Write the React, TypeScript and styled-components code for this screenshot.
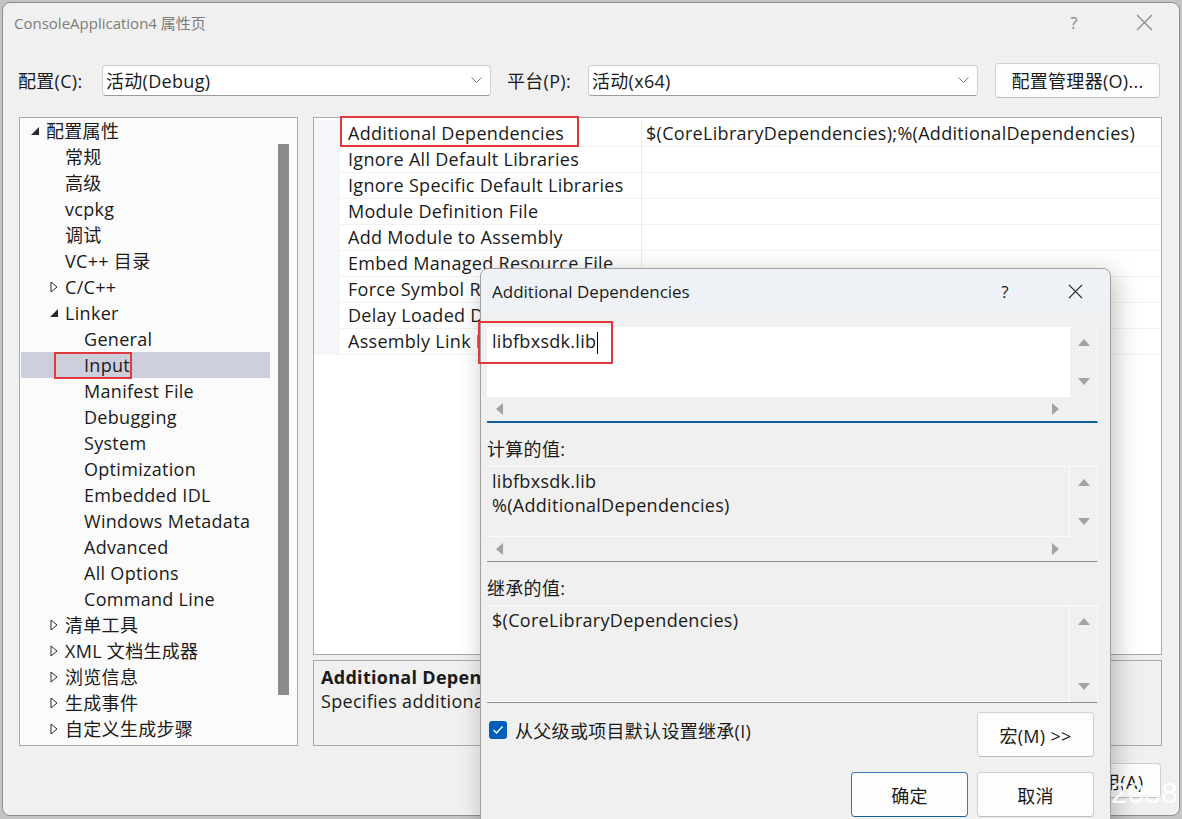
import React from 'react';
import styled, { createGlobalStyle } from 'styled-components';

const GlobalStyle = createGlobalStyle`
  html, body {
    margin: 0;
    padding: 0;
    height: 819px;
    overflow: hidden;
    background: #c4c4c4;
  }
  body {
    font-family: "Open Sans", "Noto Sans CJK SC", sans-serif;
    font-size: 18px;
    letter-spacing: 0.3px;
    color: #1a1a1a;
  }
`;

const Page = styled.div`
  position: relative;
  width: 1182px;
  height: 819px;
  overflow: hidden;
`;

const Window = styled.div`
  margin: 2px 2px 0 2px;
  height: 814px;
  box-sizing: border-box;
  border: 1px solid #8e8e8e;
  border-radius: 8px;
  background: #f0f0f0;
  display: flex;
  flex-direction: column;
`;

const TitleBar = styled.div<{ $h: number; $bg: string }>`
  height: ${(p) => p.$h}px;
  flex: none;
  display: flex;
  align-items: center;
  padding-left: 11px;
  background: ${(p) => p.$bg};
  border-radius: 8px 8px 0 0;
`;

const TitleText = styled.span<{ $muted?: boolean }>`
  font-size: ${(p) => (p.$muted ? 15 : 17)}px;
  letter-spacing: 0;
  color: ${(p) => (p.$muted ? '#7c7c7c' : '#1a1a1a')};
`;

const CaptionButton = styled.div<{ $muted?: boolean }>`
  width: 70px;
  height: 100%;
  display: flex;
  align-items: center;
  justify-content: center;
  color: ${(p) => (p.$muted ? '#8a8a8a' : '#1a1a1a')};
  font-size: 17px;
  &:first-of-type {
    margin-left: auto;
  }
`;

const ConfigRow = styled.div`
  margin-top: 21px;
  height: 36px;
  display: flex;
  align-items: center;
  padding-left: 15px;
`;

const ConfigLabel = styled.span<{ $w: number }>`
  width: ${(p) => p.$w}px;
  flex: none;
`;

const Select = styled.div<{ $w: number }>`
  width: ${(p) => p.$w}px;
  height: 31px;
  box-sizing: border-box;
  border: 1px solid #cfcfcf;
  border-bottom-color: #9a9a9a;
  border-radius: 4px;
  background: #fff;
  display: flex;
  align-items: center;
  justify-content: space-between;
  padding: 0 8px 0 3px;
  margin-right: 16px;
`;

const PushButton = styled.div<{ $w: number; $h: number; $default?: boolean }>`
  width: ${(p) => p.$w}px;
  height: ${(p) => p.$h}px;
  box-sizing: border-box;
  border: 1px solid ${(p) => (p.$default ? '#3b78b5' : '#d0d0d0')};
  border-bottom-color: ${(p) => (p.$default ? '#1f5f9e' : '#bdbdbd')};
  border-radius: 4px;
  background: #fdfdfd;
  display: flex;
  align-items: center;
  justify-content: center;
  flex: none;
`;

const Main = styled.div`
  margin-top: 19px;
  height: 629px;
  display: flex;
  gap: 15px;
  padding-left: 16px;
`;

const Tree = styled.div`
  width: 279px;
  box-sizing: border-box;
  border: 1px solid #a9a9a9;
  background: #fbfbfb;
  display: flex;
`;

const TreeList = styled.div`
  flex: 1;
  padding-left: 1px;
`;

const TreeRow = styled.div<{ $indent: number; $selected?: boolean }>`
  height: 26px;
  line-height: 26px;
  display: flex;
  align-items: center;
  padding-left: ${(p) => p.$indent}px;
  background: ${(p) => (p.$selected ? '#cdd0dc' : 'transparent')};
  white-space: nowrap;
`;

const Toggle = styled.span`
  width: 15px;
  flex: none;
  display: flex;
  align-items: center;
`;

const ScrollColumn = styled.div`
  width: 27px;
  flex: none;
  padding: 26px 0 0 8px;
  box-sizing: border-box;
`;

const Thumb = styled.div`
  width: 11px;
  height: 551px;
  background: #8b8b8b;
`;

const Marked = styled.span<{ $t: number; $r: number; $b: number; $l: number }>`
  position: relative;
  display: inline-block;
  &::after {
    content: '';
    position: absolute;
    z-index: 2;
    top: ${(p) => p.$t}px;
    right: ${(p) => p.$r}px;
    bottom: ${(p) => p.$b}px;
    left: ${(p) => p.$l}px;
    border: 2px solid #e0393e;
    pointer-events: none;
  }
`;

const RightPane = styled.div`
  width: 849px;
  display: flex;
  flex-direction: column;
  gap: 5px;
`;

const Grid = styled.div`
  height: 538px;
  box-sizing: border-box;
  border: 1px solid #a9a9a9;
  background: #fff;
  padding-top: 2px;
`;

const GridRow = styled.div`
  display: grid;
  grid-template-columns: 26px 301px 1fr;
  height: 26px;
  line-height: 26px;
`;

const Gutter = styled.div`
  background: #f4f6fa;
`;

const NameCell = styled.div`
  padding-left: 8px;
  border-bottom: 1px solid #f2f2f2;
  white-space: nowrap;
`;

const ValueCell = styled.div`
  padding-left: 4px;
  border-left: 1px solid #ededed;
  border-bottom: 1px solid #f2f2f2;
  white-space: nowrap;
`;

const Description = styled.div`
  height: 86px;
  box-sizing: border-box;
  border: 1px solid #a9a9a9;
  padding: 4px 7px;
  line-height: 24px;
`;

const DescTitle = styled.div`
  font-weight: 700;
`;

const FooterRow = styled.div`
  margin-top: 17px;
  display: flex;
  justify-content: flex-end;
  gap: 8px;
  padding-right: 18px;
`;

const Dialog = styled.div`
  position: absolute;
  left: 480px;
  top: 268px;
  width: 631px;
  height: 570px;
  box-sizing: border-box;
  border: 1px solid #a0a0a0;
  border-radius: 8px 8px 0 0;
  background: #f0f0f0;
  box-shadow: 4px 6px 26px rgba(0, 0, 0, 0.26);
  display: flex;
  flex-direction: column;
`;

const DialogBody = styled.div`
  padding: 13px 12px 0 6px;
`;

const ValueBox = styled.div<{ $hscroll?: boolean; $edit?: boolean }>`
  display: grid;
  grid-template-columns: 1fr 27px;
  grid-template-rows: ${(p) => (p.$hscroll ? '70px 24px' : '96px')};
  border-top: 1px solid ${(p) => (p.$edit ? 'transparent' : '#fbfbfb')};
  border-right: 1px solid #fbfbfb;
  border-bottom: ${(p) => (p.$edit ? '2px solid #0f5d98' : '1px solid #8c8c8c')};
`;

const TextArea = styled.div<{ $white?: boolean }>`
  background: ${(p) => (p.$white ? '#fff' : 'transparent')};
  border-right: 1px solid ${(p) => (p.$white ? '#fff' : '#fbfbfb')};
  border-bottom: 1px solid ${(p) => (p.$white ? '#fff' : '#fbfbfb')};
  padding: 2px 5px;
  line-height: 24px;
  white-space: nowrap;
`;

const VScroll = styled.div`
  display: flex;
  flex-direction: column;
  justify-content: space-between;
  align-items: center;
  padding: 12px 0 11px;
`;

const HScroll = styled.div`
  display: flex;
  justify-content: space-between;
  align-items: center;
  padding: 0 10px 0 9px;
`;

const Caret = styled.span`
  display: inline-block;
  width: 1px;
  height: 22px;
  background: #000;
  vertical-align: middle;
  margin-left: 1px;
`;

const FieldLabel = styled.div`
  margin-top: 14px;
  margin-bottom: 5px;
  line-height: 24px;
`;

const InheritRow = styled.div`
  margin-top: 9px;
  display: flex;
  justify-content: space-between;
  padding-right: 4px;
`;

const CheckGroup = styled.label`
  display: flex;
  align-items: center;
  gap: 8px;
  padding: 6px 0 0 2px;
  height: 24px;
`;

const CheckBox = styled.span`
  width: 18px;
  height: 18px;
  border-radius: 3px;
  background: #005fb8;
  display: flex;
  align-items: center;
  justify-content: center;
`;

const DialogButtons = styled.div`
  margin-top: 15px;
  display: flex;
  justify-content: flex-end;
  gap: 9px;
  padding-right: 4px;
`;

const Watermark = styled.div`
  position: absolute;
  left: 1111px;
  top: 776px;
  font-family: "Liberation Sans", sans-serif;
  font-size: 30px;
  letter-spacing: 0;
  color: rgba(255, 255, 255, 0.9);
`;

const Chevron = () => (
  <svg width="11" height="7" viewBox="0 0 11 7">
    <polyline points="0.5,0.5 5.5,5.5 10.5,0.5" fill="none" stroke="#7a7a7a" strokeWidth="1" />
  </svg>
);

const CloseGlyph = ({ size, color }: { size: number; color: string }) => (
  <svg width={size} height={size} viewBox="0 0 16 16">
    <path d="M1 1 L15 15 M15 1 L1 15" stroke={color} strokeWidth="1.2" fill="none" />
  </svg>
);

const Expanded = () => (
  <svg width="8" height="8" viewBox="0 0 8 8">
    <polygon points="8,0 8,8 0,8" fill="#2b2b2b" />
  </svg>
);

const Collapsed = () => (
  <svg width="8" height="12" viewBox="0 0 8 12">
    <polygon points="1,1 7,6 1,11" fill="none" stroke="#2b2b2b" strokeWidth="1" />
  </svg>
);

const Arrow = ({ dir }: { dir: 'up' | 'down' | 'left' | 'right' }) => {
  const pts = {
    up: '0,7 6,0 12,7',
    down: '0,0 12,0 6,7',
    left: '7,0 7,12 0,6',
    right: '0,0 0,12 7,6',
  }[dir];
  const horiz = dir === 'left' || dir === 'right';
  return (
    <svg width={horiz ? 8 : 12} height={horiz ? 12 : 8} viewBox={horiz ? '0 0 8 12' : '0 0 12 8'}>
      <polygon points={pts} fill="#a3a3a3" />
    </svg>
  );
};

const Check = () => (
  <svg width="12" height="10" viewBox="0 0 12 10">
    <polyline points="1.5,5 4.5,8 10.5,1.5" fill="none" stroke="#fff" strokeWidth="1.4" />
  </svg>
);

type Node = { label: string; level: 0 | 1 | 2; toggle?: 'open' | 'closed'; selected?: boolean };

const treeNodes: Node[] = [
  { label: '配置属性', level: 0, toggle: 'open' },
  { label: '常规', level: 1 },
  { label: '高级', level: 1 },
  { label: 'vcpkg', level: 1 },
  { label: '调试', level: 1 },
  { label: 'VC++ 目录', level: 1 },
  { label: 'C/C++', level: 1, toggle: 'closed' },
  { label: 'Linker', level: 1, toggle: 'open' },
  { label: 'General', level: 2 },
  { label: 'Input', level: 2, selected: true },
  { label: 'Manifest File', level: 2 },
  { label: 'Debugging', level: 2 },
  { label: 'System', level: 2 },
  { label: 'Optimization', level: 2 },
  { label: 'Embedded IDL', level: 2 },
  { label: 'Windows Metadata', level: 2 },
  { label: 'Advanced', level: 2 },
  { label: 'All Options', level: 2 },
  { label: 'Command Line', level: 2 },
  { label: '清单工具', level: 1, toggle: 'closed' },
  { label: 'XML 文档生成器', level: 1, toggle: 'closed' },
  { label: '浏览信息', level: 1, toggle: 'closed' },
  { label: '生成事件', level: 1, toggle: 'closed' },
  { label: '自定义生成步骤', level: 1, toggle: 'closed' },
];

const indents = [10, 29, 48];

const properties = [
  'Additional Dependencies',
  'Ignore All Default Libraries',
  'Ignore Specific Default Libraries',
  'Module Definition File',
  'Add Module to Assembly',
  'Embed Managed Resource File',
  'Force Symbol References',
  'Delay Loaded Dlls',
  'Assembly Link Resource',
];

export default function App() {
  return (
    <Page>
      <GlobalStyle />
      <Window>
        <TitleBar $h={38} $bg="transparent">
          <TitleText $muted>ConsoleApplication4 属性页</TitleText>
          <CaptionButton $muted>?</CaptionButton>
          <CaptionButton $muted>
            <CloseGlyph size={17} color="#8a8a8a" />
          </CaptionButton>
        </TitleBar>

        <ConfigRow>
          <ConfigLabel $w={84}>配置(C):</ConfigLabel>
          <Select $w={389}>
            活动(Debug)
            <Chevron />
          </Select>
          <ConfigLabel $w={81}>平台(P):</ConfigLabel>
          <Select $w={390}>
            活动(x64)
            <Chevron />
          </Select>
          <PushButton $w={165} $h={35} style={{ marginLeft: 1 }}>
            配置管理器(O)...
          </PushButton>
        </ConfigRow>

        <Main>
          <Tree>
            <TreeList>
              {treeNodes.map((n) => (
                <TreeRow key={n.label} $indent={indents[n.level]} $selected={n.selected}>
                  <Toggle>
                    {n.toggle === 'open' && <Expanded />}
                    {n.toggle === 'closed' && <Collapsed />}
                  </Toggle>
                  {n.selected ? (
                    <Marked $t={0} $r={-2} $b={-1} $l={-30}>
                      {n.label}
                    </Marked>
                  ) : (
                    n.label
                  )}
                </TreeRow>
              ))}
            </TreeList>
            <ScrollColumn>
              <Thumb />
            </ScrollColumn>
          </Tree>

          <RightPane>
            <Grid>
              {properties.map((name, i) => (
                <GridRow key={name}>
                  <Gutter />
                  <NameCell>
                    {i === 0 ? (
                      <Marked $t={-4} $r={-15} $b={-1} $l={-8}>
                        {name}
                      </Marked>
                    ) : (
                      name
                    )}
                  </NameCell>
                  <ValueCell>
                    {i === 0 ? '$(CoreLibraryDependencies);%(AdditionalDependencies)' : ''}
                  </ValueCell>
                </GridRow>
              ))}
            </Grid>
            <Description>
              <DescTitle>Additional Dependencies</DescTitle>
              <div>Specifies additional items to add to the link command line.</div>
            </Description>
          </RightPane>
        </Main>

        <FooterRow>
          <PushButton $w={95} $h={35} $default>确定</PushButton>
          <PushButton $w={95} $h={35}>取消</PushButton>
          <PushButton $w={95} $h={35}>应用(A)</PushButton>
        </FooterRow>
      </Window>

      <Dialog>
        <TitleBar $h={44} $bg="#eef2f7">
          <TitleText>Additional Dependencies</TitleText>
          <CaptionButton>?</CaptionButton>
          <CaptionButton>
            <CloseGlyph size={15} color="#1a1a1a" />
          </CaptionButton>
        </TitleBar>

        <DialogBody>
          <ValueBox $hscroll $edit>
            <TextArea $white>
              <Marked $t={-8} $r={-15} $b={-10} $l={-14}>
                libfbxsdk.lib
                <Caret />
              </Marked>
            </TextArea>
            <VScroll>
              <Arrow dir="up" />
              <Arrow dir="down" />
            </VScroll>
            <HScroll>
              <Arrow dir="left" />
              <Arrow dir="right" />
            </HScroll>
            <div />
          </ValueBox>

          <FieldLabel>计算的值:</FieldLabel>
          <ValueBox $hscroll>
            <TextArea>
              libfbxsdk.lib
              <br />
              %(AdditionalDependencies)
            </TextArea>
            <VScroll>
              <Arrow dir="up" />
              <Arrow dir="down" />
            </VScroll>
            <HScroll>
              <Arrow dir="left" />
              <Arrow dir="right" />
            </HScroll>
            <div />
          </ValueBox>

          <FieldLabel>继承的值:</FieldLabel>
          <ValueBox>
            <TextArea>$(CoreLibraryDependencies)</TextArea>
            <VScroll>
              <Arrow dir="up" />
              <Arrow dir="down" />
            </VScroll>
          </ValueBox>

          <InheritRow>
            <CheckGroup>
              <CheckBox>
                <Check />
              </CheckBox>
              从父级或项目默认设置继承(I)
            </CheckGroup>
            <PushButton $w={117} $h={45}>宏(M) &gt;&gt;</PushButton>
          </InheritRow>

          <DialogButtons>
            <PushButton $w={117} $h={45} $default>确定</PushButton>
            <PushButton $w={117} $h={45}>取消</PushButton>
          </DialogButtons>
        </DialogBody>
      </Dialog>

      <Watermark>2088</Watermark>
    </Page>
  );
}
